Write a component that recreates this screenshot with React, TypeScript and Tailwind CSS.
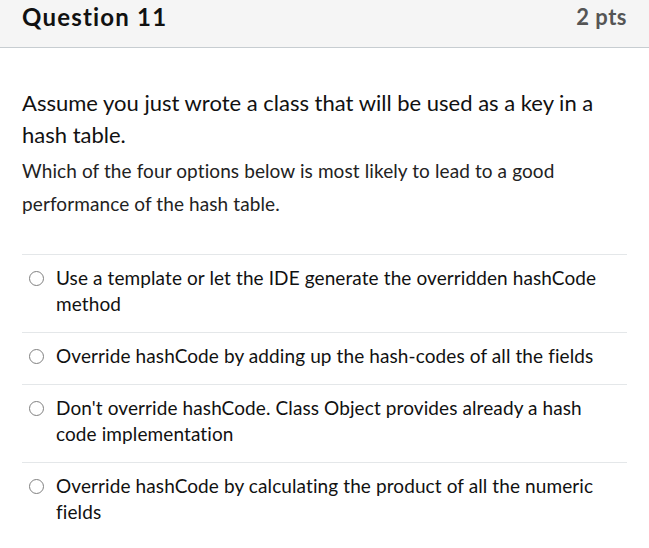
const OPTIONS = [
  'Use a template or let the IDE generate the overridden hashCode method',
  'Override hashCode by adding up the hash-codes of all the fields',
  "Don't override hashCode. Class Object provides already a hash code implementation",
  'Override hashCode by calculating the product of all the numeric fields',
]

export default function App() {
  return (
    <div className="w-[649px] h-[548px] bg-white text-[#2d3b45] font-['Lato',sans-serif] overflow-hidden">
      {/* Header */}
      <div className="h-[48px] bg-[#f5f5f5] border-b border-[#c7cdd1] flex items-start justify-between px-[22px] pt-[1px]">
        <h2 className="text-[24px] font-bold text-[#111] leading-[32px] tracking-[1.2px]">Question 11</h2>
        <span className="text-[22px] font-bold text-[#555] leading-[32px] tracking-[0.5px]">2 pts</span>
      </div>

      {/* Body */}
      <div className="px-[22px] pt-[39px]">
        <p className="text-[22px] leading-[32px] text-[#111]">
          Assume you just wrote a class that will be used as a key in a hash table.
        </p>
        <p className="text-[19px] leading-[33px] text-[#222] tracking-[0.1px] pt-[3px]">
          Which of the four options below is most likely to lead to a good performance of the hash table.
        </p>

        <div className="mt-[34px]">
          {OPTIONS.map((opt) => (
            <label key={opt} className="flex items-start border-t border-[#e4e7e9] pt-[10px] pb-[15px]">
              <span className="w-[34px] shrink-0 flex justify-start pt-[6px] pl-[7px]">
                <span className="block w-[15px] h-[15px] rounded-full border border-[#808080] bg-white" />
              </span>
              <span className="text-[19px] leading-[26px] text-[#111] tracking-[0.1px] pr-[12px]">{opt}</span>
            </label>
          ))}
        </div>
      </div>
    </div>
  )
}
